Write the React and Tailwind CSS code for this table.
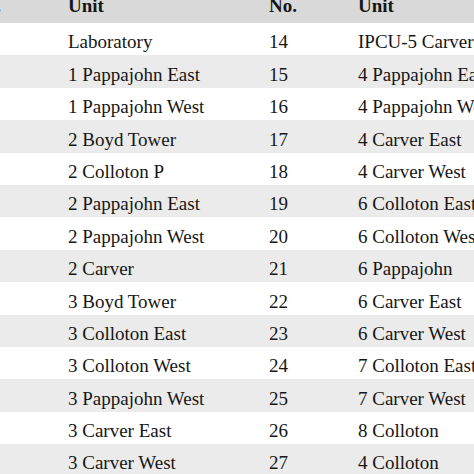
const rows = [
  ["0", "Laboratory", "14", "IPCU-5 Carver"],
  ["1", "1 Pappajohn East", "15", "4 Pappajohn East"],
  ["2", "1 Pappajohn West", "16", "4 Pappajohn West"],
  ["3", "2 Boyd Tower", "17", "4 Carver East"],
  ["4", "2 Colloton P", "18", "4 Carver West"],
  ["5", "2 Pappajohn East", "19", "6 Colloton East"],
  ["6", "2 Pappajohn West", "20", "6 Colloton West"],
  ["7", "2 Carver", "21", "6 Pappajohn"],
  ["8", "3 Boyd Tower", "22", "6 Carver East"],
  ["9", "3 Colloton East", "23", "6 Carver West"],
  ["10", "3 Colloton West", "24", "7 Colloton East"],
  ["11", "3 Pappajohn West", "25", "7 Carver West"],
  ["12", "3 Carver East", "26", "8 Colloton"],
  ["13", "3 Carver West", "27", "4 Colloton"],
]

export default function App() {
  return (
    <div className="w-[474px] h-[474px] overflow-hidden bg-white text-[#161616] text-[19px] font-[Liberation_Serif,Times_New_Roman,serif]">
      <div className="ml-[-30px] w-[620px]">

        {/* Header, its top is cut off in the picture */}
        <div className="grid grid-cols-[98px_201px_89px_1fr] grid-rows-[23px] h-[23px] overflow-hidden bg-[#d9d9d9] font-bold">
          <div className="flex items-end h-[23px] pb-[8px] pl-[3px] leading-none whitespace-nowrap">No.</div>
          <div className="flex items-end h-[23px] pb-[8px] leading-none whitespace-nowrap">Unit</div>
          <div className="flex items-end h-[23px] pb-[8px] leading-none whitespace-nowrap">No.</div>
          <div className="flex items-end h-[23px] pb-[8px] leading-none whitespace-nowrap">Unit</div>
        </div>

        {/* Body */}
        {rows.map((r, i) => (
          <div
            key={i}
            className={
              "grid grid-cols-[98px_201px_89px_1fr] h-[32.4px] " +
              (i % 2 === 1 ? "bg-[#ebebeb]" : "bg-white")
            }
          >
            <div className="flex items-end pb-[4px] pl-[3px] leading-none whitespace-nowrap">{r[0]}</div>
            <div className="flex items-end pb-[4px] leading-none whitespace-nowrap">{r[1]}</div>
            <div className="flex items-end pb-[4px] leading-none whitespace-nowrap">{r[2]}</div>
            <div className="flex items-end pb-[4px] leading-none whitespace-nowrap">{r[3]}</div>
          </div>
        ))}
      </div>
    </div>
  )
}
